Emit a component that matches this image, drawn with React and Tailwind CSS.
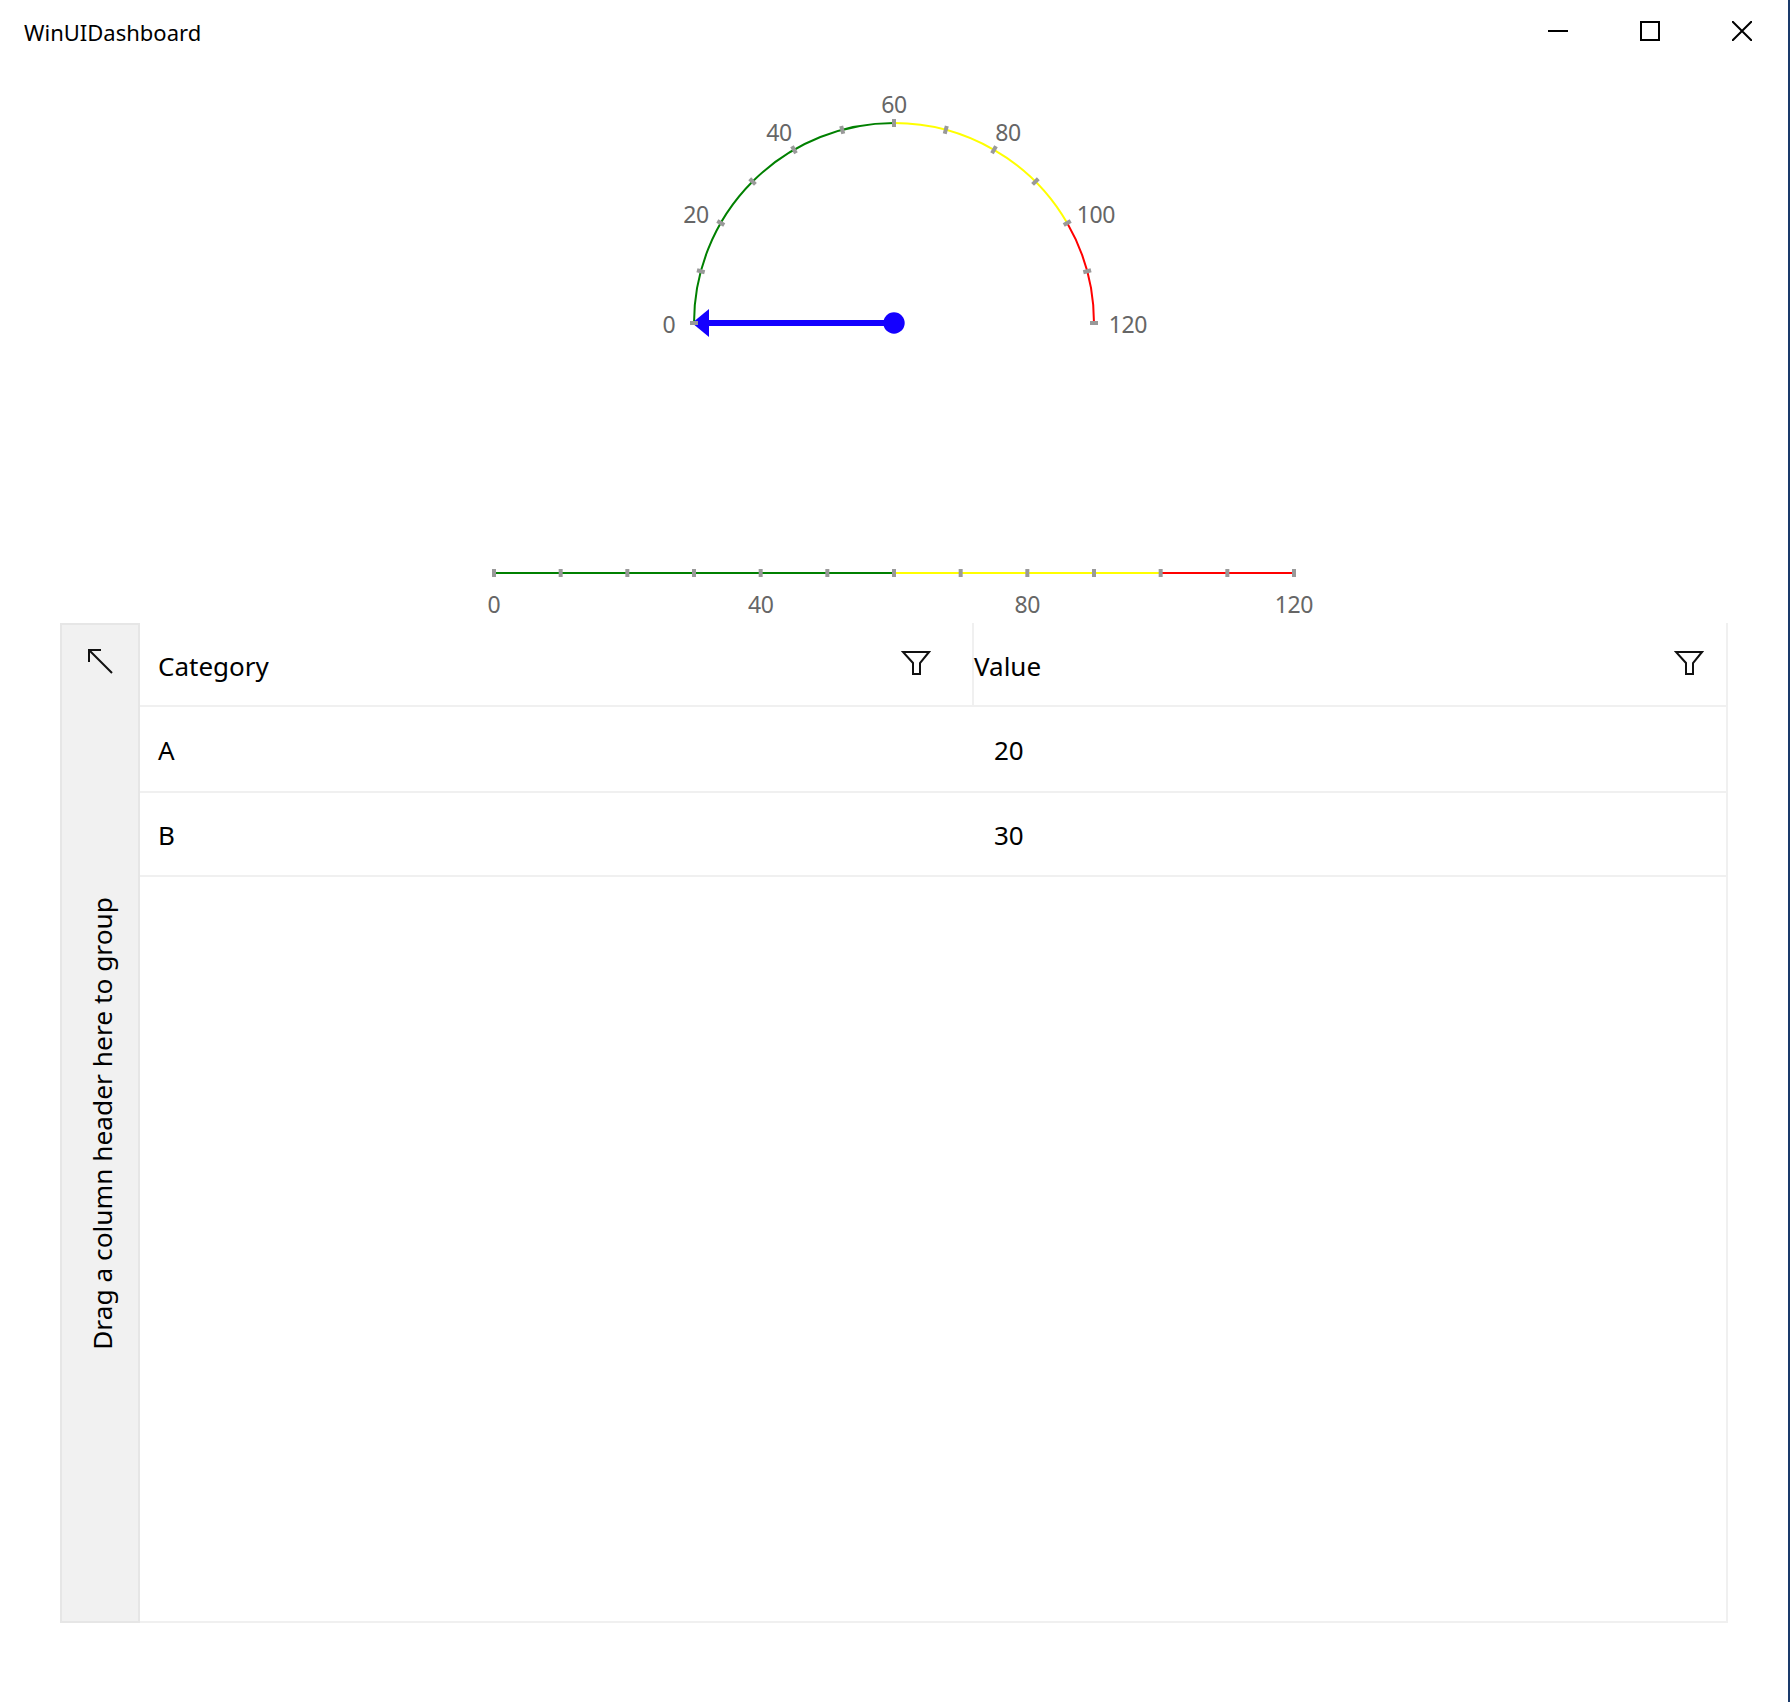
const FONT = "font-['Noto_Sans',sans-serif]";
const pt = (v, r) => {
  const a = ((180 - v * 1.5) * Math.PI) / 180;
  return [894 + r * Math.cos(a), 323 - r * Math.sin(a)];
};
const arc = (a, b) => {
  const [x1, y1] = pt(a, 200);
  const [x2, y2] = pt(b, 200);
  return `M${x1} ${y1}A200 200 0 0 1 ${x2} ${y2}`;
};
const TICKS = [0, 10, 20, 30, 40, 50, 60, 70, 80, 90, 100, 110, 120];
const GAUGE_LABELS = [
  [0, 669, 325],
  [20, 696, 215],
  [40, 779, 133],
  [60, 894, 105],
  [80, 1008, 133],
  [100, 1096, 215],
  [120, 1128, 325],
];

function RadialGauge() {
  return (
    <svg width="520" height="480" viewBox="634 64 520 480" className="block mx-auto">
      <g fill="none" strokeWidth="2">
        <path d={arc(0, 60)} stroke="#008000" />
        <path d={arc(60, 100)} stroke="#ffff00" />
        <path d={arc(100, 120)} stroke="#ff0000" />
      </g>
      <path d="M894 323H706" stroke="#1400ff" strokeWidth="6" />
      <path d="M692 323L709 309V337Z" fill="#1400ff" />
      <circle cx="894" cy="323" r="10.7" fill="#1400ff" />
      {TICKS.map((v) => {
        const [x1, y1] = pt(v, 196);
        const [x2, y2] = pt(v, 204);
        return <line key={v} x1={x1} y1={y1} x2={x2} y2={y2} stroke="#999999" strokeWidth="4" />;
      })}
      {GAUGE_LABELS.map(([v, x, y]) => (
        <text key={v} x={x} y={y + 8} textAnchor="middle" fontSize="23" fill="#666666" letterSpacing="-0.4">
          {v}
        </text>
      ))}
    </svg>
  );
}

function LinearGauge() {
  const x = (v) => 494 + (v * 800) / 120;
  return (
    <svg width="880" height="79" viewBox="454 544 880 79" className="block mx-auto">
      <g strokeWidth="2">
        <line x1={x(0)} y1="573" x2={x(60)} y2="573" stroke="#008000" />
        <line x1={x(60)} y1="573" x2={x(100)} y2="573" stroke="#ffff00" />
        <line x1={x(100)} y1="573" x2={x(120)} y2="573" stroke="#ff0000" />
      </g>
      {TICKS.map((v) => (
        <line key={v} x1={x(v)} y1="569" x2={x(v)} y2="577" stroke="#999999" strokeWidth="4" />
      ))}
      {[0, 40, 80, 120].map((v) => (
        <text key={v} x={x(v)} y="613" textAnchor="middle" fontSize="23" fill="#666666" letterSpacing="-0.4">
          {v}
        </text>
      ))}
    </svg>
  );
}

function FilterIcon() {
  return (
    <svg width="30" height="26" viewBox="0 0 30 26" fill="none" stroke="#111111" strokeWidth="2" className="shrink-0 translate-x-[1px] -translate-y-[1px]">
      <path d="M2 2H28L19 13V24H12V13Z" />
    </svg>
  );
}

function Row({ a, b, h }) {
  return (
    <div className={`flex items-center border-b-2 border-[#f0f0f0] pt-[2px] text-[26px] leading-none text-black ${h}`}>
      <div className="w-[834px] pl-[18px]">{a}</div>
      <div className="pl-[20px]">{b}</div>
    </div>
  );
}

export default function App() {
  return (
    <div className={`relative h-[1702px] w-[1790px] border-r-2 border-[#1a3a6b] bg-white ${FONT}`}>
      <header className="flex h-[64px] items-center justify-between">
        <div className="pl-[24px] text-[22px] text-black">WinUIDashboard</div>
        <div className="flex items-center gap-[72px] pb-[2px] pr-[36px]">
          <svg width="20" height="20" viewBox="0 0 20 20"><path d="M0 10H20" stroke="#000" strokeWidth="2" /></svg>
          <svg width="20" height="20" viewBox="0 0 20 20"><rect x="1" y="1" width="18" height="18" fill="none" stroke="#000" strokeWidth="2" /></svg>
          <svg width="20" height="20" viewBox="0 0 20 20"><path d="M0 0L20 20M20 0L0 20" stroke="#000" strokeWidth="2" /></svg>
        </div>
      </header>
      <RadialGauge />
      <LinearGauge />
      <section className="mx-[60px] flex h-[1000px] border-b-2 border-r-2 border-[#f0f0f0]">
        <aside className="relative flex h-[1000px] w-[80px] shrink-0 items-center justify-center border-2 border-[#e6e6e6] bg-[#f1f1f1]">
          <svg width="26" height="26" viewBox="0 0 26 26" fill="none" stroke="#111111" strokeWidth="2" className="absolute left-[25px] top-[23px]">
            <path d="M2 14V2H14M2 2L25 25" />
          </svg>
          <span className="ml-[4px] rotate-180 text-[26.3px] leading-none text-black [writing-mode:vertical-rl]">
            Drag a column header here to group
          </span>
        </aside>
        <div className="min-w-0 flex-1">
          <div className="flex h-[84px] items-stretch border-b-2 border-[#f0f0f0] text-[26px] text-black">
            <div className="flex w-[834px] items-center justify-between border-r-2 border-[#f0f0f0] pl-[18px] pr-[42px]">
              <span className="translate-y-[2px]">Category</span>
              <FilterIcon />
            </div>
            <div className="flex flex-1 items-center justify-between pr-[23px]">
              <span className="translate-y-[2px]">Value</span>
              <FilterIcon />
            </div>
          </div>
          <Row a="A" b="20" h="h-[86px]" />
          <Row a="B" b="30" h="h-[84px]" />
        </div>
      </section>
    </div>
  );
}
